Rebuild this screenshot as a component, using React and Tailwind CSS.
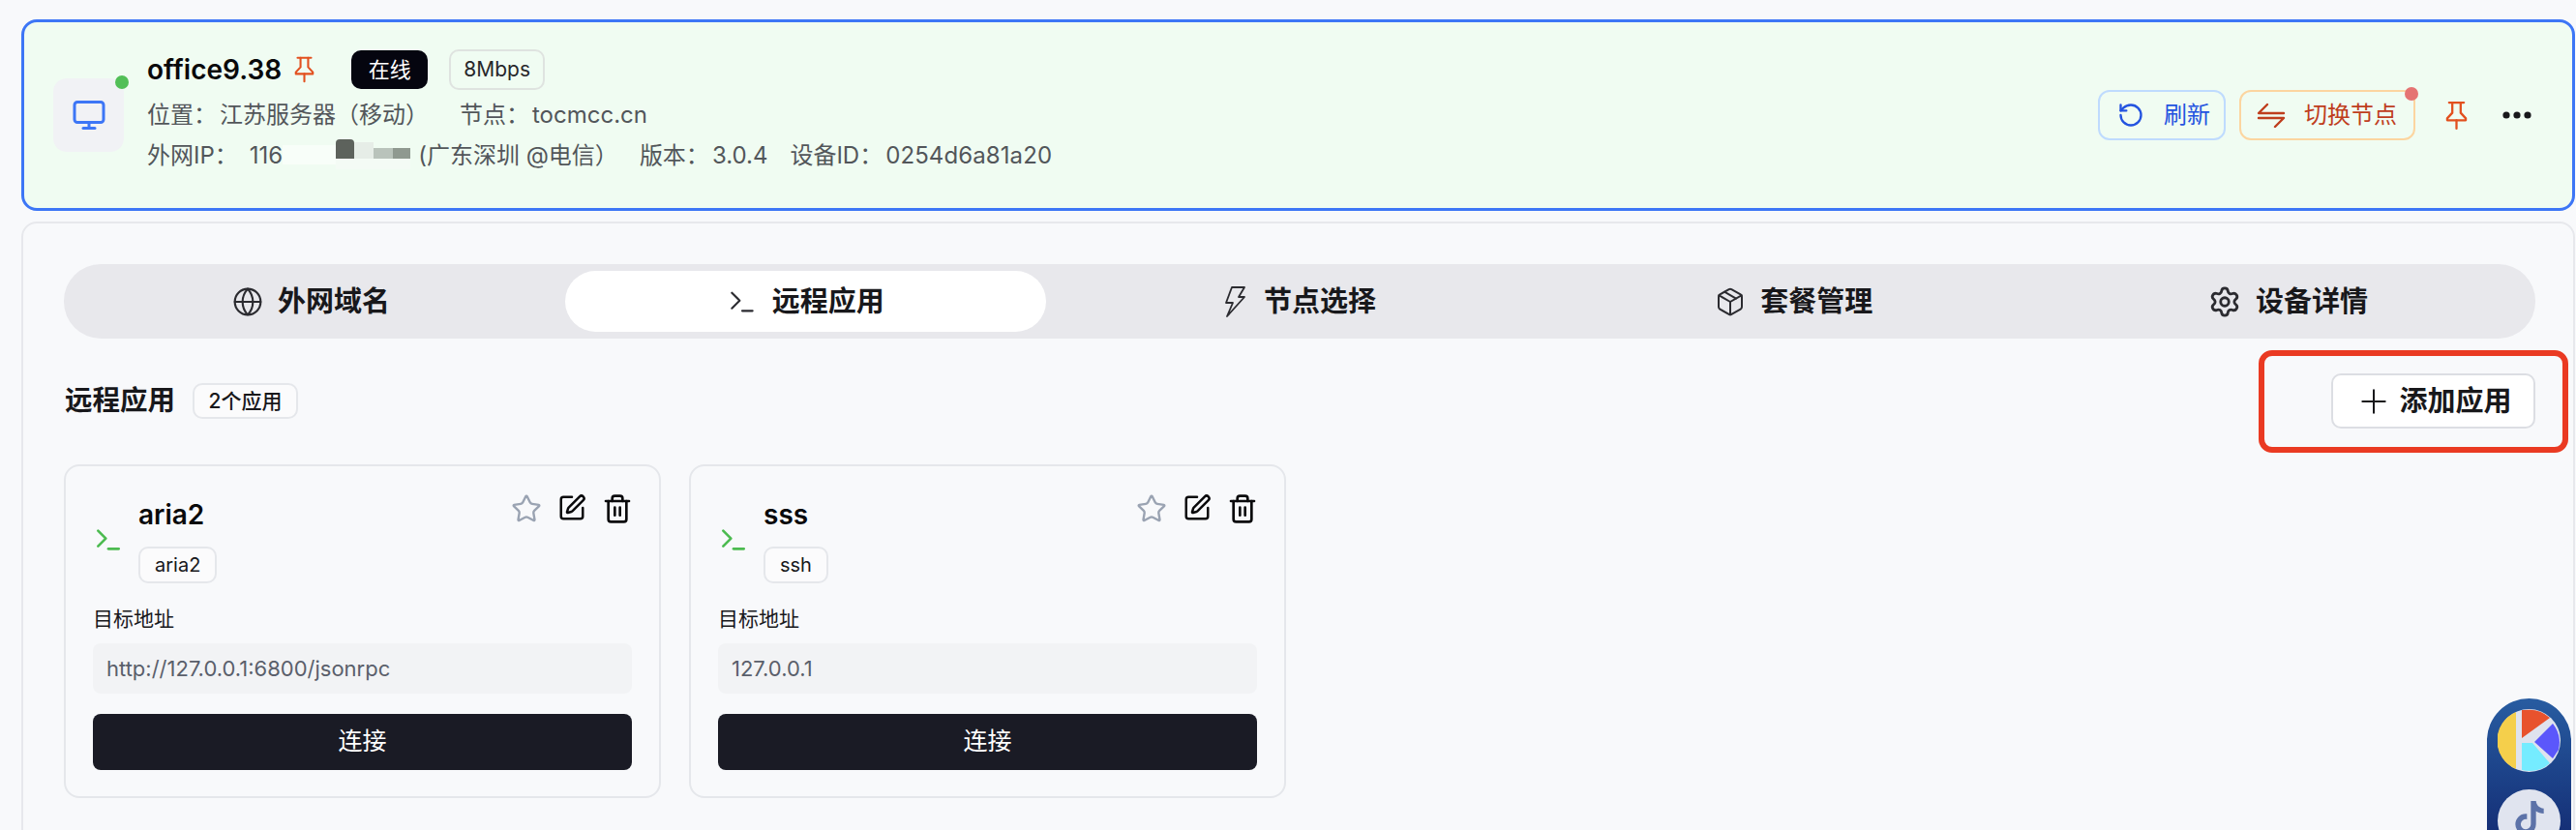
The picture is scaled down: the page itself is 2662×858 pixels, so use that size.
import React from "react";
import { Globe, Monitor, Package, Plus, RotateCcw, Settings, SquarePen, Star, Terminal, Trash2 } from "lucide-react";

function BoltIcon({ className }) {
  return (
    <svg className={className} width="24" height="34" viewBox="0 0 24 34" fill="none" stroke="currentColor" strokeWidth="1.8" strokeLinejoin="round">
      <path d="M9 2h13l-6 10h6L4 32l6-14H3Z" />
    </svg>
  );
}

const tabs = [
  { label: "外网域名", icon: Globe, size: "w-[32px] h-[32px]", sw: 1.6 },
  { label: "远程应用", icon: Terminal, active: true, size: "w-[32px] h-[32px]", sw: 1.6 },
  { label: "节点选择", icon: BoltIcon, size: "w-[24px] h-[34px] mr-[3px]", sw: 1.6 },
  { label: "套餐管理", icon: Package, size: "w-[32px] h-[32px]", sw: 1.5 },
  { label: "设备详情", icon: Settings, size: "w-[34px] h-[34px]", sw: 2 },
];

const apps = [
  { name: "aria2", tag: "aria2", addr: "http://127.0.0.1:6800/jsonrpc" },
  { name: "sss", tag: "ssh", addr: "127.0.0.1" },
];

const fontStack = "font-['Inter','Noto_Sans_CJK_SC',sans-serif]";

function PinIcon({ className }) {
  return (
    <svg className={className} viewBox="0 0 24 32" fill="none" stroke="currentColor" strokeWidth="2.4" strokeLinecap="round" strokeLinejoin="round">
      <path d="M4 2h16" />
      <path d="M7.500 2v11L2 19v2h20v-2l-5.500-6V2" />
      <path d="M12 21v9" />
    </svg>
  );
}

function SwapIcon() {
  return (
    <svg width="30" height="26" viewBox="0 0 30 26" fill="none" stroke="currentColor" strokeWidth="2.4" strokeLinecap="round" strokeLinejoin="round">
      <path d="M11 2 2 11h26" />
      <path d="M2 16h26l-9 9" />
    </svg>
  );
}

function MaskedIp() {
  return (
    <span className="relative inline-block w-[140px] h-[30px]">
      <span className="absolute left-0 top-[4px] w-[55px] h-[20px] bg-[#f8fef9]" />
      <span className="absolute left-[55px] -top-[2px] w-[19px] h-[20px] bg-[#5d625c] rounded-t-[4px]" />
      <span className="absolute left-[74px] top-[1px] w-[20px] h-[17px] bg-[#e6ede7]" />
      <span className="absolute left-[94px] top-[7px] w-[20px] h-[11px] bg-[#b9c3bb]" />
      <span className="absolute left-[114px] top-[7px] w-[18px] h-[11px] bg-[#8f9990]" />
      <span className="absolute left-[55px] top-[18px] w-[77px] h-[11px] bg-[#f4fbf5]" />
    </span>
  );
}

function AppCard({ app }) {
  return (
    <div className="w-[617px] h-[345px] rounded-[16px] border-2 border-[#e5e7eb] px-[28px] pt-[28px]">
      <div className="flex h-[95px]">
        <Terminal className="w-[32px] h-[32px] mt-[32px] text-[#4cbb50] shrink-0" strokeWidth={2} />
        <div className="ml-[15px] flex-1">
          <div className="text-[28px] leading-[44px] font-semibold text-[#09090b]">{app.name}</div>
          <span className="mt-[11px] inline-flex items-center h-[38px] px-[15px] rounded-[10px] border-2 border-[#e5e7eb] bg-white/40 text-[20px] text-[#18181b]">{app.tag}</span>
        </div>
        <div className="flex items-start gap-[16px] -mr-[1px]">
          <Star className="w-[32px] h-[32px] text-[#9aa3b2]" strokeWidth={1.8} />
          <SquarePen className="w-[30px] h-[30px] text-[#09090b]" strokeWidth={2} />
          <Trash2 className="w-[32px] h-[32px] text-[#09090b]" strokeWidth={2} />
        </div>
      </div>
      <div className="mt-[19px] text-[21px] leading-[32px] text-[#18181b]">目标地址</div>
      <div className="mt-[9px] h-[52px] rounded-[8px] bg-[#f2f3f5] flex items-center px-[14px] text-[22px] text-[#5a5f6b]">{app.addr}</div>
      <button className="mt-[21px] w-full h-[58px] rounded-[8px] bg-[#1a1b25] text-white text-[25px]">连接</button>
    </div>
  );
}

export default function App() {
  return (
    <div className={`relative w-full h-[858px] overflow-hidden bg-[#f8f9fb] pt-[20px] pl-[22px] pr-px ${fontStack}`}>
      {/* device header */}
      <div className="h-[198px] rounded-[16px] border-[3px] border-[#3d76f6] bg-[#f0fcf2] flex items-center pl-[30px] pr-[42px]">
        <div className="relative w-[73px] h-[76px] rounded-[14px] bg-[#f1f2f5] flex items-center justify-center">
          <Monitor className="w-[36px] h-[36px] text-[#3d76f6]" strokeWidth={2} />
          <span className="absolute -top-[3px] -right-[5px] w-[14px] h-[14px] rounded-full bg-[#52bf57]" />
        </div>
        <div className="ml-[24px] -mt-[7px]">
          <div className="flex items-center h-[44px]">
            <span className="text-[28px] font-semibold text-[#09090b]">office9.38</span>
            <PinIcon className="ml-[13px] w-[21px] h-[28px] text-[#e2501f]" />
            <span className="ml-[38px] h-[40px] w-[79px] rounded-[10px] bg-[#05050f] text-white text-[22px] flex items-center justify-center">在线</span>
            <span className="ml-[22px] h-[42px] w-[99px] rounded-[10px] border-2 border-[#dfe3e0] text-[#27272a] text-[21px] flex items-center justify-center">8Mbps</span>
          </div>
          <div className="mt-[5px] h-[40px] flex items-center text-[24px] text-[#52565a] whitespace-pre">
            <span>位置：</span>
            <span className="ml-[3px]">江苏服务器（移动）</span>
            <span className="ml-[32px]">节点：</span>
            <span className="ml-[3px]">tocmcc.cn</span>
          </div>
          <div className="mt-[2px] h-[40px] flex items-center text-[24px] text-[#52565a] whitespace-pre">
            <span>外网IP：</span>
            <span className="ml-[12px]">116</span>
            <MaskedIp />
            <span>(广东深圳 @电信）</span>
            <span className="ml-[22px]">版本：</span>
            <span className="ml-[3px]">3.0.4</span>
            <span className="ml-[23px]">设备ID：</span>
            <span className="ml-[3px] tracking-[0.1px]">0254d6a81a20</span>
          </div>
        </div>
        <div className="ml-auto flex items-center">
          <button className="h-[52px] w-[132px] rounded-[12px] border-2 border-[#bfdbfe] text-[#2353e0] text-[24px] flex items-center pl-[18px] gap-[20px]">
            <RotateCcw className="w-[28px] h-[28px]" strokeWidth={2} />
            刷新
          </button>
          <button className="relative ml-[14px] h-[52px] w-[182px] rounded-[12px] border-2 border-[#fcd5a0] text-[#bf3e1d] text-[24px] flex items-center pl-[16px] gap-[19px]">
            <SwapIcon />
            切换节点
            <span className="absolute -top-[5px] -right-[5px] w-[14px] h-[14px] rounded-full bg-[#e57373]" />
          </button>
          <PinIcon className="ml-[31px] w-[23px] h-[31px] text-[#e2501f]" />
          <svg className="ml-[36px] text-[#18181b]" width="30" height="8" viewBox="0 0 30 8" fill="currentColor">
            <circle cx="4" cy="4" r="3.6" />
            <circle cx="15" cy="4" r="3.6" />
            <circle cx="26" cy="4" r="3.6" />
          </svg>
        </div>
      </div>

      {/* main panel */}
      <div className="mt-[11px] h-[700px] rounded-t-[16px] border-2 border-[#e7e8ec] pl-[42px] pr-[39px] pt-[42px]">
        <div className="h-[77px] rounded-[38px] bg-[#e8e8ec] p-[7px] grid grid-cols-5 gap-[14px]">
          {tabs.map((t) => (
            <div key={t.label} className={`flex items-center justify-center gap-[15px] rounded-[32px] text-[29px] font-semibold text-[#18181b] ${t.active ? "bg-white" : ""}`}>
              <t.icon className={`${t.size} text-[#2b2b30]`} strokeWidth={t.sw} />
              {t.label}
            </div>
          ))}
        </div>

        <div className="mt-[36px] h-[57px] flex items-center">
          <span className="ml-[1px] text-[28.500px] font-semibold text-[#18181b]">远程应用</span>
          <span className="ml-[18px] h-[37px] w-[109px] rounded-[10px] border-2 border-[#e5e7eb] bg-white/40 text-[21px] font-medium text-[#18181b] flex items-center justify-center">2个应用</span>
          <button className="relative ml-auto w-[211px] h-[57px] rounded-[10px] border-2 border-[#dcdee3] bg-white text-[29px] font-semibold text-[#18181b] flex items-center justify-center gap-[6px]">
            <Plus className="w-[40px] h-[40px]" strokeWidth={1.2} />
            添加应用
            <span className="absolute -left-[77px] -top-[26px] -right-[36px] -bottom-[27px] rounded-[14px] border-[6px] border-[#ea3a22]" />
          </button>
        </div>

        <div className="mt-[37px] flex gap-[29px]">
          {apps.map((a) => (
            <AppCard key={a.name} app={a} />
          ))}
        </div>
      </div>

      {/* floating widget */}
      <div className="absolute left-[2570px] top-[722px] w-[87px] h-[180px] rounded-t-[44px] bg-linear-to-b from-[#285ca1] to-[#11216a] flex flex-col items-center pt-[11px] gap-[18px]">
        <svg width="65" height="65" viewBox="0 0 65 65">
          <circle cx="32.500" cy="32.500" r="32.500" fill="#dfe3ee" />
          <path d="M19 3A32 32 0 0 0 19 62Z" fill="#f5cf4b" />
          <path d="M25 1h3A32 32 0 0 1 54 9L25 30Z" fill="#e8522d" />
          <path d="M57 15a32 32 0 0 1 6 27l-6 9-19-17Z" fill="#5b57fb" />
          <path d="M25 35h11l18 21a32 32 0 0 1-29 7Z" fill="#75ecff" />
        </svg>
        <div className="w-[65px] h-[65px] rounded-full bg-[#e0e4ef] flex items-start justify-center pt-[12px]">
          <svg width="32" height="36" viewBox="0 0 24 27" fill="#5c72a8">
            <path d="M13 0h4c.3 3 2.200 5.400 6 5.800v4c-2.400 0-4.400-.7-6-1.900V18a8 8 0 1 1-8-8h1v4.200a3.900 3.900 0 1 0 3 3.800Z" />
          </svg>
        </div>
      </div>
    </div>
  );
}
